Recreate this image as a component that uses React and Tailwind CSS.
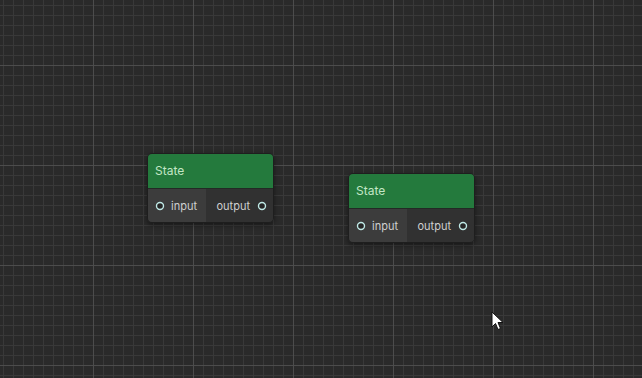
import React from 'react';

const nodes = [
  { id: 1, x: 147, y: 153, title: 'State' },
  { id: 2, x: 348, y: 173, title: 'State' },
];

const Socket = () => (
  <svg width="10" height="10" viewBox="0 0 10 10" className="shrink-0">
    <circle cx="5" cy="5" r="3.5" fill="#262626" stroke="#bfe9e6" strokeWidth="1.4" />
  </svg>
);

const GridBackground = () => (
  <svg className="absolute inset-0 w-full h-full" width="642" height="378">
    <defs>
      <pattern id="minor" x="3" y="5" width="10" height="10" patternUnits="userSpaceOnUse">
        <path d="M0.5 0 V10 M0 0.5 H10" stroke="#393939" strokeWidth="1" fill="none" />
      </pattern>
      <pattern id="major" x="93" y="65" width="100" height="100" patternUnits="userSpaceOnUse">
        <path d="M0.5 0 V100 M0 0.5 H100" stroke="#4c4c4c" strokeWidth="1" fill="none" />
      </pattern>
    </defs>
    <rect width="100%" height="100%" fill="#2a2a2a" />
    <rect width="100%" height="100%" fill="url(#minor)" />
    <rect width="100%" height="100%" fill="url(#major)" />
  </svg>
);

const StateNode = ({ x, y, title }) => (
  <div
    className="absolute w-[127px] rounded-[5px] overflow-hidden border border-[#1e1e1e] shadow-[0_2px_5px_rgba(0,0,0,0.45)]"
    style={{ left: x, top: y }}
  >
    <div className="h-[35px] bg-[#247a3d] flex items-center px-[7px] border-b border-[#232a25]">
      <span className="text-[12px] text-[#c2e6c5]">{title}</span>
    </div>
    <div className="h-[33px] flex">
      <div className="w-[58px] bg-[#3c3c3c] flex items-center gap-[6px] pl-[7px] pt-[1px]">
        <Socket />
        <span className="text-[11px] text-[#cfcfcf]">input</span>
      </div>
      <div className="flex-1 bg-[#313131] flex items-center justify-end gap-[7px] pr-[6px] pt-[1px]">
        <span className="text-[11px] text-[#cfcfcf]">output</span>
        <Socket />
      </div>
    </div>
  </div>
);

const Cursor = () => (
  <svg className="absolute left-[491px] top-[311px]" width="14" height="20" viewBox="0 0 14 20">
    <path d="M1 1 L1 16 L4.5 12.5 L7 18.5 L9.5 17.5 L7 11.5 L12 11.5 Z" fill="#ffffff" stroke="#111" strokeWidth="1" strokeLinejoin="round" />
  </svg>
);

export default function App() {
  return (
    <div
      className="relative w-[642px] h-[378px] overflow-hidden bg-[#2a2a2a]"
      style={{ fontFamily: 'Inter, "Noto Sans", sans-serif' }}
    >
      <GridBackground />
      {nodes.map(n => (
        <StateNode key={n.id} {...n} />
      ))}
      <Cursor />
    </div>
  );
}
